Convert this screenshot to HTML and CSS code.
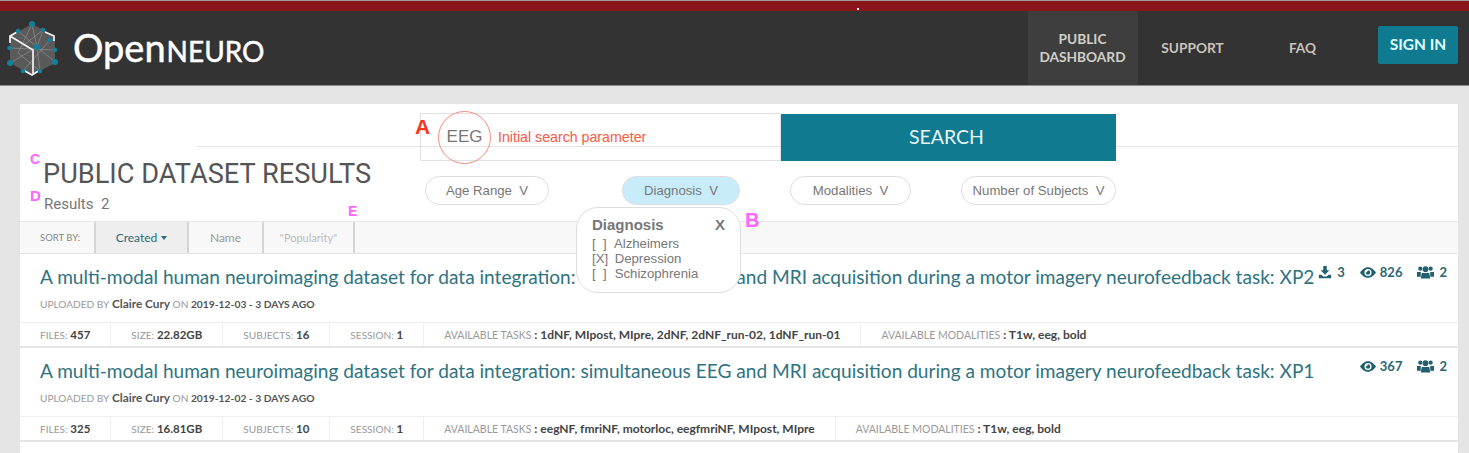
FILE: index.html
```html
<!DOCTYPE html>
<html lang="en">
<head>
<meta charset="utf-8">
<title>OpenNEURO - Public Dataset Results</title>
<link rel="stylesheet" href="styles.css">
</head>
<body>
<div class="topstrip"><span class="speck"></span></div>
<header class="navbar">
  <a class="brand">
    <svg class="logo" viewBox="0 0 60 80" width="60" height="80" aria-hidden="true">
      <polygon points="32,21 55,33 55,60 32,72 10,60 10,33" fill="#5a5a5a"/>
      <g stroke="#8a8a8a" stroke-width="0.8" fill="none">
        <path d="M32 21L37 44L10 60M18 28L37 44L55 59M43 27L37 44L40 68M50 37L23 68M9 45L55 47M32 21L18 50L40 68M43 27L20 45"/>
      </g>
      <g stroke="#f2f2f2" stroke-width="1.7" fill="none">
        <path d="M17 29L10 33V40M10 33L33 47V71M23 67L32 72L40 67M45 29L54 33V38"/>
      </g>
      <g fill="#11809a">
        <circle cx="32" cy="21" r="3"/><circle cx="18" cy="28" r="2.3"/><circle cx="43" cy="27" r="2.3"/>
        <circle cx="50" cy="37" r="2.3"/><circle cx="37" cy="44" r="3"/><circle cx="55" cy="47" r="2.3"/>
        <circle cx="9.500" cy="45" r="2.3"/><circle cx="10" cy="60" r="3"/><circle cx="55" cy="59" r="3"/>
        <circle cx="23" cy="68" r="2.3"/><circle cx="40" cy="68" r="2.3"/>
      </g>
    </svg>
    <span class="wordmark">Open<span class="wordmark-small">NEURO</span></span>
  </a>
  <nav class="navlinks">
    <a class="navlink active">PUBLIC<br>DASHBOARD</a>
    <a class="navlink">SUPPORT</a>
    <a class="navlink">FAQ</a>
  </nav>
  <a class="signin">SIGN IN</a>
</header>

<main class="panel">
  <section class="search-band">
    <div class="searchbox">
      <span class="searchterm">EEG</span>
      <span class="searchnote">Initial search parameter</span>
      <span class="mark mark-a">A</span>
    </div>
    <button class="searchbtn">SEARCH</button>
  </section>

  <section class="head">
    <div class="titles">
      <h1>PUBLIC DATASET RESULTS</h1>
      <p class="count">Results&nbsp; 2</p>
      <span class="mark mark-c">C</span>
      <span class="mark mark-d">D</span>
    </div>
    <div class="filters">
      <span class="pill pill-age">Age Range&nbsp; V</span>
      <span class="pill pill-diag">Diagnosis&nbsp; V</span>
      <span class="pill pill-mod">Modalities&nbsp; V</span>
      <span class="pill pill-sub">Number of Subjects&nbsp; V</span>
    </div>
  </section>

  <section class="sortbar">
    <span class="sortlabel">SORT BY:</span>
    <a class="sortitem current">Created <i class="caret"></i></a>
    <a class="sortitem s-name">Name</a>
    <a class="sortitem s-pop">"Popularity"</a>
    <span class="mark mark-e">E</span>
  </section>

  <aside class="popover">
    <div class="pop-head"><span>Diagnosis</span><span>X</span></div>
    <div class="pop-opt"><span class="box">[&nbsp; ]</span> Alzheimers</div>
    <div class="pop-opt"><span class="box">[X]</span> Depression</div>
    <div class="pop-opt"><span class="box">[&nbsp; ]</span> Schizophrenia</div>
    <span class="mark mark-b">B</span>
  </aside>

  <article class="dataset">
    <div class="ds-top">
      <h2>A multi-modal human neuroimaging dataset for data integration: simultaneous EEG and MRI acquisition during a motor imagery neurofeedback task: XP2</h2>
      <div class="metrics">
        <span class="metric m-dl"><svg class="ic" viewBox="0 0 16 16"><path d="M6 1h4v5h3L8 11 3 6h3zM1 11h3l2 2h4l2-2h3v4H1z"/></svg>3</span>
        <span class="metric m-eye"><svg class="ic ic-eye" viewBox="0 0 18 12"><path fill-rule="evenodd" d="M9 0c4 0 7 3 9 6-2 3-5 6-9 6s-7-3-9-6c2-3 5-6 9-6zm0 2a4 4 0 1 0 0 8 4 4 0 0 0 0-8zm0 1.500a2.500 2.500 0 1 1-2.500 2.500c0 .5 2.500-1 2.500-2.500z"/></svg>826</span>
        <span class="metric m-usr"><svg class="ic ic-usr" viewBox="0 0 18 14"><circle cx="9" cy="4" r="3"/><circle cx="3.500" cy="3.500" r="2.200"/><circle cx="14.500" cy="3.500" r="2.200"/><path d="M5 8h8l1 6H4zM0 7h4v5H0zM14 7h4v5h-4z"/></svg>2</span>
      </div>
    </div>
    <p class="uploaded"><span class="lbl">UPLOADED BY</span> <b class="who">Claire Cury</b> <span class="lbl">ON</span> <span class="when">2019-12-03 - 3 DAYS AGO</span></p>
    <ul class="stats">
      <li><span class="lbl">FILES:</span> 457</li>
      <li><span class="lbl">SIZE:</span> 22.82GB</li>
      <li><span class="lbl">SUBJECTS:</span> 16</li>
      <li><span class="lbl">SESSION:</span> 1</li>
      <li class="wide"><span class="lbl">AVAILABLE TASKS</span> : 1dNF, MIpost, MIpre, 2dNF, 2dNF_run-02, 1dNF_run-01</li>
      <li class="wide last"><span class="lbl">AVAILABLE MODALITIES</span> : T1w, eeg, bold</li>
    </ul>
  </article>

  <article class="dataset">
    <div class="ds-top">
      <h2>A multi-modal human neuroimaging dataset for data integration: simultaneous EEG and MRI acquisition during a motor imagery neurofeedback task: XP1</h2>
      <div class="metrics">
        <span class="metric m-eye"><svg class="ic ic-eye" viewBox="0 0 18 12"><path fill-rule="evenodd" d="M9 0c4 0 7 3 9 6-2 3-5 6-9 6s-7-3-9-6c2-3 5-6 9-6zm0 2a4 4 0 1 0 0 8 4 4 0 0 0 0-8zm0 1.500a2.500 2.500 0 1 1-2.500 2.500c0 .5 2.500-1 2.500-2.500z"/></svg>367</span>
        <span class="metric m-usr"><svg class="ic ic-usr" viewBox="0 0 18 14"><circle cx="9" cy="4" r="3"/><circle cx="3.500" cy="3.500" r="2.200"/><circle cx="14.500" cy="3.500" r="2.200"/><path d="M5 8h8l1 6H4zM0 7h4v5H0zM14 7h4v5h-4z"/></svg>2</span>
      </div>
    </div>
    <p class="uploaded"><span class="lbl">UPLOADED BY</span> <b class="who">Claire Cury</b> <span class="lbl">ON</span> <span class="when">2019-12-02 - 3 DAYS AGO</span></p>
    <ul class="stats">
      <li><span class="lbl">FILES:</span> 325</li>
      <li><span class="lbl">SIZE:</span> 16.81GB</li>
      <li><span class="lbl">SUBJECTS:</span> 10</li>
      <li><span class="lbl">SESSION:</span> 1</li>
      <li class="wide"><span class="lbl">AVAILABLE TASKS</span> : eegNF, fmriNF, motorloc, eegfmriNF, MIpost, MIpre</li>
      <li class="wide last"><span class="lbl">AVAILABLE MODALITIES</span> : T1w, eeg, bold</li>
    </ul>
  </article>
</main>
</body>
</html>
```
FILE: styles.css
```css
* { box-sizing: border-box; }
html, body { height: 100%; }
body {
  margin: 0;
  overflow: hidden;
  background: #e5e5e5;
  font-family: Lato, "Liberation Sans", sans-serif;
  color: #444;
}
a { text-decoration: none; }

.topstrip {
  position: relative;
  height: 11px;
  background: #8a1619;
  border-top: 1px solid #a09a9a;
}
.speck {
  position: absolute;
  left: 857px;
  top: 7px;
  width: 2px;
  height: 2px;
  background: #fff;
}

.navbar {
  display: flex;
  align-items: stretch;
  height: 75px;
  padding-right: 11px;
  background: #333;
  border-bottom: 1px solid #8a8a8a;
}
.brand {
  display: flex;
  align-items: center;
  flex: 1;
  color: #fff;
}
.logo { display: block; margin: -11px 14px 0 0; flex: none; }
.wordmark {
  margin-left: -1px;
  margin-top: -2px;
  font-size: 38px;
  font-weight: 400;
  line-height: 1;
  -webkit-text-stroke: 0.5px #fff;
}
.wordmark-small { font-size: 28px; margin-left: 1px; }

.navlinks { display: flex; }
.navlink {
  display: flex;
  align-items: center;
  justify-content: center;
  width: 110px;
  padding-right: 1px;
  color: #c8c4bb;
  font-size: 13.700px;
  font-weight: 700;
  line-height: 18px;
  text-align: center;
}
.navlink.active { background: #3e3e3e; color: #d2cfc8; }
.signin {
  align-self: flex-start;
  width: 80px;
  height: 38px;
  margin: 15px 0 0 20px;
  background: #107a90;
  border-radius: 2px;
  color: #dff;
  font-size: 15.500px;
  font-weight: 700;
  line-height: 36px;
  text-align: center;
}

.panel {
  position: relative;
  height: 349px;
  margin: 18px 11px 0 20px;
  background: #fff;
}

.search-band {
  display: flex;
  height: 43px;
  margin-left: 177px;
  padding: 9px 342px 0 223px;
  border-bottom: 1px solid #e4e4e4;
}
.searchbox {
  position: relative;
  display: flex;
  align-items: center;
  flex: none;
  width: 361px;
  height: 48px;
  border: 1px solid #e0e0e0;
  background: transparent;
  color: #777;
  font-family: "Liberation Sans", sans-serif;
}
.searchterm {
  display: flex;
  align-items: center;
  justify-content: center;
  width: 53px;
  height: 53px;
  margin-left: 17px;
  border: 1.500px solid #f58a7c;
  border-radius: 50%;
  background: transparent;
  font-size: 17px;
}
.searchnote { margin-left: 7px; color: #fb5a45; font-size: 14.200px; }
.searchbtn {
  flex: none;
  width: 335px;
  height: 47px;
  margin-top: 1px;
  padding: 0 4px 3px 0;
  border: 0;
  background: #107a90;
  color: #e8f5f7;
  font-family: Lato, "Liberation Sans", sans-serif;
  font-size: 19.500px;
}

.mark {
  position: absolute;
  font-family: "Liberation Sans", sans-serif;
  font-weight: 700;
  line-height: 1;
  color: #ff66ff;
}
.mark-a { left: -6px; top: 2px; color: #f5371f; font-size: 21px; }
.mark-b { left: 168px; top: 2px; font-size: 20px; }
.mark-c { left: 10px; top: 5px; font-size: 14px; }
.mark-d { left: 10px; top: 41px; font-size: 15px; }
.mark-e { left: 328px; top: -18px; font-size: 14px; }

.head { display: flex; height: 74px; }
.titles { position: relative; width: 405px; flex: none; padding: 11px 0 0 23px; font-family: Roboto, sans-serif; }
h1 {
  margin: 0;
  color: #555;
  font-size: 27.200px;
  font-weight: 400;
  line-height: 32px;
  white-space: nowrap;
}
.count { margin: 2px 0 0 1px; color: #777; font-size: 15px; line-height: 24px; }

.filters {
  display: flex;
  gap: 50px;
  padding-top: 29px;
  font-family: "Liberation Sans", sans-serif;
  color: #777;
  font-size: 13.200px;
}
.pill {
  display: flex;
  align-items: center;
  justify-content: center;
  height: 29px;
  border: 1px solid #ddd;
  border-radius: 15px;
  background: #fff;
  white-space: nowrap;
}
.pill-age { width: 124px; }
.pill-diag { width: 118px; margin-left: 23px; background: #c9ecfb; }
.pill-mod { width: 121px; }
.pill-sub { width: 155px; }

.sortbar {
  position: relative;
  display: flex;
  align-items: stretch;
  height: 33px;
  background: #f8f8f8;
  border-top: 1px solid #e6e6e6;
  border-bottom: 1px solid #e6e6e6;
  font-size: 12px;
}
.sortlabel {
  display: flex;
  align-items: center;
  width: 74px;
  padding-left: 20px;
  color: #888;
  font-size: 9.500px;
  white-space: nowrap;
}
.sortitem {
  display: flex;
  align-items: center;
  justify-content: center;
  border-left: 2px solid #d4d4d4;
  color: #999;
  width: 93px;
}
.sortitem.current { background: #eee; color: #2c6b78; }
.s-name { width: 75px; }
.s-pop { width: 93px; border-right: 2px solid #d4d4d4; color: #bbb; font-size: 11px; }
.caret {
  width: 0;
  height: 0;
  margin-left: 4px;
  border: 3px solid transparent;
  border-top: 4px solid #2c6b78;
  border-bottom: 0;
}

.popover {
  position: absolute;
  z-index: 2;
  left: 556px;
  top: 103px;
  width: 165px;
  height: 86px;
  padding: 8px 15px;
  border: 1px solid #ddd;
  border-radius: 22px;
  background: #fff;
  color: #777;
  font-family: "Liberation Sans", sans-serif;
  font-size: 13.200px;
  line-height: 15px;
}
.pop-head {
  display: flex;
  justify-content: space-between;
  margin-bottom: 3px;
  font-size: 15px;
  font-weight: 700;
  line-height: 17px;
}
.box { display: inline-block; width: 19px; white-space: nowrap; }

.dataset {
  height: 94px;
  background: #fff;
  border-bottom: 2px solid #e5e5e5;
}
.ds-top {
  display: flex;
  justify-content: space-between;
  height: 35px;
  padding: 11px 11px 0 20px;
}
h2 {
  margin: 0;
  color: #2f7380;
  font-size: 19.080px;
  font-weight: 400;
  line-height: 24px;
  white-space: nowrap;
}
.metrics {
  display: flex;
  color: #2a6673;
  font-size: 13px;
  font-weight: 700;
  line-height: 14px;
}
.metric { display: flex; align-items: center; height: 14px; }
.ic { display: block; width: 14px; height: 14px; margin-right: 5px; fill: #21606e; }
.ic-eye { width: 16px; height: 11px; margin-right: 4px; }
.ic-usr { width: 17px; height: 14px; }
.m-eye { margin-left: 15px; }
.m-usr { margin-left: 15px; }

.uploaded {
  margin: 0;
  padding-left: 20px;
  height: 33px;
  color: #555;
  font-size: 10.300px;
  font-weight: 700;
  line-height: 30px;
}
.lbl { color: #999; font-weight: 400; font-size: 10.100px; }
.who { font-size: 11.800px; font-weight: 700; }
.when { color: #555; }

.stats {
  display: flex;
  height: 24px;
  margin: 0;
  padding: 0;
  list-style: none;
  border-top: 1px solid #eee;
  color: #444;
  font-size: 11.500px;
  font-weight: 700;
  line-height: 23px;
  white-space: nowrap;
}
.stats li { padding: 0 20px; border-right: 1px solid #f0f0f0; }
.stats li.wide { font-size: 12px; }
.stats li.wide .lbl { font-size: 10.500px; }
.stats li.last { border-right: 0; }
```
